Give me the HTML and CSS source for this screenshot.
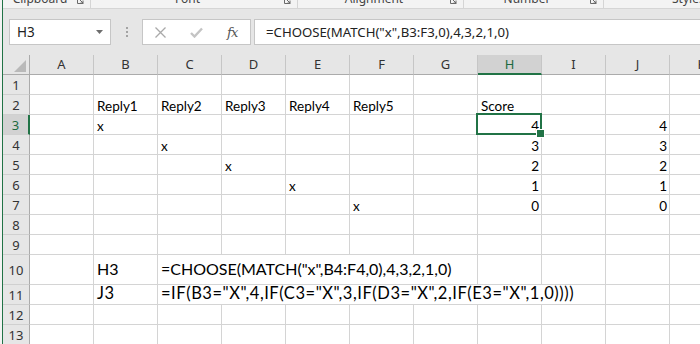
FILE: index.html
```html
<!DOCTYPE html>
<html lang="en">
<head>
  <meta charset="UTF-8">
  <title>CHOOSE / MATCH scores</title>
  <link rel="stylesheet" href="styles.css">
</head>
<body>
<div class="app">

  <div class="ribbon">
    <div class="group g1"><span class="glabel">Clipboard</span><svg class="launch" viewBox="0 0 7 7"><path d="M0.5 0 V6.5 H6.5 M2.5 2.5 L6 6 M6 3.5 V6 H3.5" fill="none" stroke="#6a6a6a" stroke-width="1"/></svg></div>
    <div class="group g2"><span class="glabel">Font</span><svg class="launch" viewBox="0 0 7 7"><path d="M0.5 0 V6.5 H6.5 M2.5 2.5 L6 6 M6 3.5 V6 H3.5" fill="none" stroke="#6a6a6a" stroke-width="1"/></svg></div>
    <div class="group g3"><span class="glabel">Alignment</span><svg class="launch" viewBox="0 0 7 7"><path d="M0.5 0 V6.5 H6.5 M2.5 2.5 L6 6 M6 3.5 V6 H3.5" fill="none" stroke="#6a6a6a" stroke-width="1"/></svg></div>
    <div class="group g4"><span class="glabel">Number</span><svg class="launch" viewBox="0 0 7 7"><path d="M0.5 0 V6.5 H6.5 M2.5 2.5 L6 6 M6 3.5 V6 H3.5" fill="none" stroke="#6a6a6a" stroke-width="1"/></svg></div>
    <div class="group g5"><span class="glabel">Styles</span></div>
  </div>

  <div class="fbar">
    <div class="namebox"><span>H3</span><svg class="drop" viewBox="0 0 7 4"><path d="M0 0 H7 L3.5 4 Z" fill="#6d6d6d"/></svg></div>
    <div class="grip"><i></i><i></i><i></i></div>
    <div class="fbtns">
      <span class="fb"><svg width="11" height="11" viewBox="0 0 11 11"><path d="M0.5 0.5 L10.5 10.5 M10.5 0.5 L0.5 10.5" stroke="#a9a9a9" stroke-width="1.3"/></svg></span>
      <span class="fb"><svg width="13" height="11" viewBox="0 0 13 11"><path d="M1 6 L4.5 9.5 L12 1.5" fill="none" stroke="#c4c4c4" stroke-width="2.4"/></svg></span>
      <span class="fb fx">fx</span>
    </div>
    <div class="formula">=CHOOSE(MATCH("x",B3:F3,0),4,3,2,1,0)</div>
  </div>

  <div class="sheet">
    <div class="row head">
      <div class="corner"><svg width="12" height="12" viewBox="0 0 12 12"><path d="M12 0 V12 H0 Z" fill="#b9b9b9"/></svg></div>
      <div class="ch">A</div><div class="ch">B</div><div class="ch">C</div><div class="ch">D</div><div class="ch">E</div><div class="ch">F</div><div class="ch">G</div><div class="ch on">H</div><div class="ch">I</div><div class="ch">J</div><div class="ch">K</div>
    </div>

    <div class="row"><div class="rh">1</div><div class="c"></div><div class="c"></div><div class="c"></div><div class="c"></div><div class="c"></div><div class="c"></div><div class="c"></div><div class="c"></div><div class="c"></div><div class="c"></div><div class="c"></div></div>

    <div class="row"><div class="rh">2</div><div class="c"></div><div class="c">Reply1</div><div class="c">Reply2</div><div class="c">Reply3</div><div class="c">Reply4</div><div class="c">Reply5</div><div class="c"></div><div class="c">Score</div><div class="c"></div><div class="c"></div><div class="c"></div></div>

    <div class="row"><div class="rh on">3</div><div class="c"></div><div class="c">x</div><div class="c"></div><div class="c"></div><div class="c"></div><div class="c"></div><div class="c"></div><div class="c num sel">4</div><div class="c"></div><div class="c num">4</div><div class="c"></div></div>

    <div class="row"><div class="rh">4</div><div class="c"></div><div class="c"></div><div class="c">x</div><div class="c"></div><div class="c"></div><div class="c"></div><div class="c"></div><div class="c num">3</div><div class="c"></div><div class="c num">3</div><div class="c"></div></div>

    <div class="row"><div class="rh">5</div><div class="c"></div><div class="c"></div><div class="c"></div><div class="c">x</div><div class="c"></div><div class="c"></div><div class="c"></div><div class="c num">2</div><div class="c"></div><div class="c num">2</div><div class="c"></div></div>

    <div class="row"><div class="rh">6</div><div class="c"></div><div class="c"></div><div class="c"></div><div class="c"></div><div class="c">x</div><div class="c"></div><div class="c"></div><div class="c num">1</div><div class="c"></div><div class="c num">1</div><div class="c"></div></div>

    <div class="row"><div class="rh">7</div><div class="c"></div><div class="c"></div><div class="c"></div><div class="c"></div><div class="c"></div><div class="c">x</div><div class="c"></div><div class="c num">0</div><div class="c"></div><div class="c num">0</div><div class="c"></div></div>

    <div class="row"><div class="rh">8</div><div class="c"></div><div class="c"></div><div class="c"></div><div class="c"></div><div class="c"></div><div class="c"></div><div class="c"></div><div class="c"></div><div class="c"></div><div class="c"></div><div class="c"></div></div>

    <div class="row"><div class="rh">9</div><div class="c"></div><div class="c"></div><div class="c"></div><div class="c"></div><div class="c"></div><div class="c"></div><div class="c"></div><div class="c"></div><div class="c"></div><div class="c"></div><div class="c"></div></div>

    <div class="row tall big"><div class="rh">10</div><div class="c"></div><div class="c">H3</div><div class="c span5">=CHOOSE(MATCH("x",B4:F4,0),4,3,2,1,0)</div><div class="c"></div><div class="c"></div><div class="c"></div><div class="c"></div></div>

    <div class="row big wide"><div class="rh">11</div><div class="c"></div><div class="c">J3</div><div class="c span7">=IF(B3="X",4,IF(C3="X",3,IF(D3="X",2,IF(E3="X",1,0))))</div><div class="c"></div><div class="c"></div></div>

    <div class="row"><div class="rh">12</div><div class="c"></div><div class="c"></div><div class="c"></div><div class="c"></div><div class="c"></div><div class="c"></div><div class="c"></div><div class="c"></div><div class="c"></div><div class="c"></div><div class="c"></div></div>

    <div class="row"><div class="rh">13</div><div class="c"></div><div class="c"></div><div class="c"></div><div class="c"></div><div class="c"></div><div class="c"></div><div class="c"></div><div class="c"></div><div class="c"></div><div class="c"></div><div class="c"></div></div>
  </div>

</div>
</body>
</html>
```

FILE: styles.css
```css
* { box-sizing: border-box; }
body { margin: 0; background: #f3f3f3; overflow: hidden; }
.app { margin-left: 2px; border-left: 1px solid #217346; width: 698px; height: 344px; overflow: hidden; background: #fff; font-family: "Noto Sans", sans-serif; }

/* ribbon group captions, cut off at the top */
.ribbon { display: flex; height: 9px; background: #f3f3f3; border-bottom: 1px solid #d5d5d5; overflow: hidden; }
.group { display: flex; flex: none; height: 8px; border-right: 1px solid #d5d5d5; }
.glabel { flex: 1; text-align: center; font-size: 12px; line-height: 14px; margin-top: -8px; color: #444; white-space: nowrap; }
.launch { flex: none; width: 7px; height: 7px; margin: -3px 6px 0 0; }
.g1 { width: 88px; }
.g2 { width: 207px; }
.g3 { width: 166px; }
.g4 { width: 140px; }
.g5 { flex: 1; border-right: none; padding-left: 68px; }
.g5 .glabel { flex: none; }

/* formula bar */
.fbar { display: flex; align-items: flex-start; height: 46px; background: #e6e6e6; padding-top: 10px; }
.namebox { display: flex; align-items: center; margin-left: 6px; width: 102px; height: 26px; background: #fff; border: 1px solid #c6c6c6; padding-left: 7px; font-size: 13.5px; color: #222; }
.drop { width: 7px; height: 4px; margin-left: auto; margin-right: 7px; }
.grip { display: flex; flex-direction: column; align-items: center; gap: 2px; width: 31px; padding-top: 8px; }
.grip i { display: block; width: 2px; height: 2px; background: #a3a3a3; }
.fbtns { display: flex; align-items: center; width: 109px; height: 26px; background: #fff; border: 1px solid #c6c6c6; }
.fb { display: flex; justify-content: center; align-items: center; width: 36px; }
.fx { font-family: "DejaVu Serif", serif; font-style: italic; font-size: 13px; color: #555; letter-spacing: -1px; }
.formula { flex: 1; margin-left: 3px; height: 26px; background: #fff; border: 1px solid #c6c6c6; border-right: none; padding-left: 11px; font-size: 13.2px; line-height: 24px; color: #222; white-space: nowrap; }

/* sheet grid */
.row { display: flex; height: 20px; }
.row.tall { height: 30px; }
.corner, .rh, .ch { flex: none; background: #e6e6e6; color: #333; font-size: 13px; }
.corner { display: flex; justify-content: flex-end; align-items: flex-end; width: 27px; border-right: 1px solid #ababab; border-bottom: 1px solid #ababab; padding: 0 3px 2px 0; }
.ch { width: 64px; text-align: center; line-height: 19px; border-right: 1px solid #c6c6c6; border-bottom: 1px solid #ababab; }
.ch.on { background: #d2d2d2; color: #1d6a40; border-bottom: 2px solid #217346; }
.rh { display: flex; justify-content: center; align-items: center; width: 27px; border-right: 1px solid #ababab; border-bottom: 1px solid #d0d0d0; }
.rh.on { background: #d2d2d2; color: #1d6a40; border-right: 2px solid #217346; }

.c { display: flex; align-items: flex-end; flex: none; width: 64px; padding: 0 2px 0 3px; border-right: 1px solid #d4d4d4; border-bottom: 1px solid #d4d4d4; font-family: Lato, sans-serif; font-size: 13.5px; line-height: 1.2; color: #000; white-space: nowrap; }
.c.num { justify-content: flex-end; padding-right: 2px; }
.big .c { font-size: 16px; }
.wide .c { font-size: 16.5px; letter-spacing: 0.55px; }
.tall .c { padding-bottom: 6px; }
.span5 { width: 320px; }
.span7 { width: 448px; }

/* active cell frame and fill handle */
.sel { position: relative; z-index: 1; }
.sel::after { content: ""; position: absolute; top: -2px; left: -2px; right: -1px; bottom: -1px; border: 2px solid #217346; }
.sel::before { content: ""; position: absolute; right: -4px; bottom: -4px; width: 7px; height: 7px; background: #217346; border: 1px solid #fff; z-index: 2; }
```
